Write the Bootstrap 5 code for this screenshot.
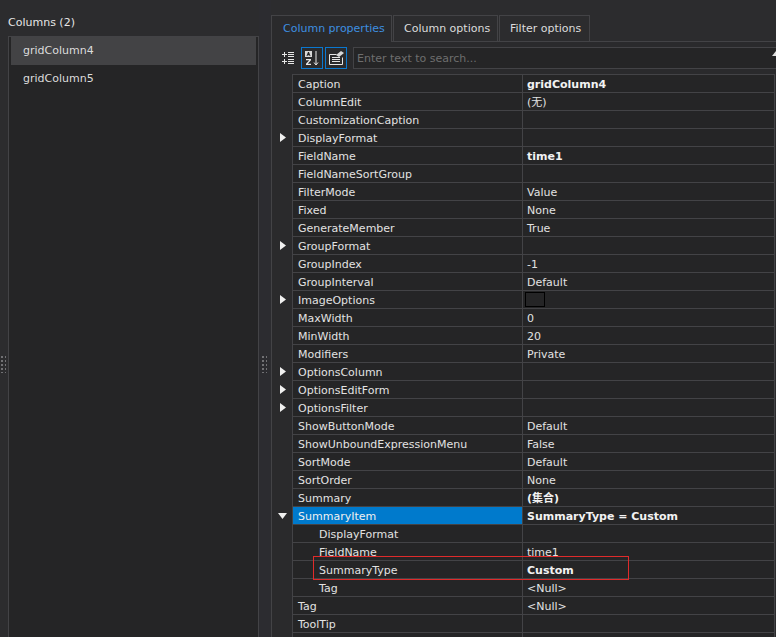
<!DOCTYPE html>
<html lang="en"><head><meta charset="utf-8">
<link href="https://cdn.jsdelivr.net/npm/bootstrap@5.3.0/dist/css/bootstrap.min.css" rel="stylesheet">
<style>
html,body{height:637px;overflow:hidden}
body{background:#2c2c2e;color:#e6e6e6;font-family:"DejaVu Sans","Noto Sans CJK SC",sans-serif;font-size:11px;line-height:17px}
.app{width:776px;height:637px;overflow:hidden}
.left{width:259px;flex:none;padding-left:8px}
.left-title{height:36px;padding-top:14px}
.list-box{height:601px;width:251px;background:#252526;border:1px solid #434346;border-bottom:0;padding:0 2px}
.item{height:28px;padding:5px 0 0 12px;line-height:17px;color:#dcdcdc}
.item.on{background:#434345}
.splitter{width:12px;flex:none;background:#2c2c30;position:relative}
.grip{position:absolute;left:2px;top:355px;width:6px;height:18px;background-image:radial-gradient(#77777a 0.7px,transparent 0.8px);background-size:4px 4px}
.grip-left{position:absolute;left:0;top:355px;width:6px;height:18px;background-image:radial-gradient(#77777a 0.7px,transparent 0.8px);background-size:4px 4px}
.right{flex:1;min-width:0;padding-top:15px}
.tabs{height:27px;border-bottom:1px solid #434346}
.tab{height:26px;padding:4px 10px 0 10px;border:1px solid #434346;border-bottom:0;margin-right:1px;color:#dcdcdc;white-space:nowrap}
.tab.on{background:#2a2a2c;color:#3e8fe0;padding-left:11px;height:27px;margin-bottom:-1px;width:121px}
.tab.t2{width:105px}
.tab.t3{width:91px}
.body{background:#2a2a2c;height:595px;border-left:1px solid #434346}
.toolbar{height:32px;padding:5px 0 0 5px}
.tbtn{width:22px;height:22px;margin-right:2px;border:1px solid transparent;display:flex;align-items:center;justify-content:center;flex:none}
.tbtn.on{border-color:#0a78d0}
.search{height:22px;flex:1;margin-left:4px;border:1px solid #434346;border-right:0;color:#6e6e6e;padding:2px 3px 0;background:#252526;position:relative}
.clear{position:absolute;right:0;top:3px}
.grid{margin:0 1px 0 20px;border-top:1px solid #434346;border-left:1px solid #434346;background:#252526}
.row-p{height:18px;display:flex;border-bottom:1px solid #434346;position:relative}
.n{width:230px;flex:none;padding-left:5px;padding-top:1px;border-right:1px solid #434346;white-space:nowrap;line-height:17px;color:#e2e2e2;overflow:hidden}
.v{flex:1;padding-left:4px;padding-top:1px;white-space:nowrap;line-height:17px;color:#e2e2e2;border-right:1px solid #434346;overflow:hidden}
.n.sub{padding-left:26px}
.n.sel{background:#007acc;color:#f0f0f0}
.b{font-weight:700;color:#f2f2f2}
.arrow{position:absolute;left:-13px;top:4px}
.arrow.down{left:-15px;top:6px}
.red{position:absolute;left:20px;top:-5px;width:316px;height:24px;border:1px solid #e02b2b;z-index:2}
.swatch{display:block;width:20px;height:15px;border:1px solid #000;margin:0 0 0 -2px;background:#252526}
</style></head>
<body>
<div class="app d-flex">
 <div class="left position-relative">
  <div class="grip-left"></div>
  <div class="left-title">Columns (2)</div>
  <div class="list-box">
   <div class="item on">gridColumn4</div>
   <div class="item">gridColumn5</div>
  </div>
 </div>
 <div class="splitter"><div class="grip"></div></div>
 <div class="right">
  <div class="tabs d-flex">
   <div class="tab on">Column properties</div>
   <div class="tab t2">Column options</div>
   <div class="tab t3">Filter options</div>
  </div>
  <div class="body">
   <div class="toolbar d-flex">
    <div class="tbtn"><svg width="12" height="12" viewBox="0 0 12 12" fill="none" stroke="#e6e6e6"><path d="M0 2.500h5M2.500 0v5M0 9.500h5M2.500 7v5M6 .5h6M6 2.500h6M6 4.500h6M6 7.500h6M6 9.500h6M6 11.500h6"/></svg></div>
    <div class="tbtn on"><svg width="14" height="14" viewBox="0 0 14 14" fill="none"><path d="M0 0h7v6H0z" fill="#d8d8d8"/><path d="M3 1 1.500 5h1l.2-.8h1.600l.2.8h1L4 1z" fill="#252526"/><path d="M1 8h5v1.200L2.800 12.800H6V14H1v-1.200L4.200 9.200H1z" fill="#e6e6e6"/><path d="M11 0v13.500M9 11.500l2 2.500 2-2.500" stroke="#e6e6e6"/></svg></div>
    <div class="tbtn on"><svg width="15" height="14" viewBox="0 0 15 14" fill="none"><path d="M.5 3.500h7M.5 3.500v10h13v-7" stroke="#e6e6e6"/><path d="M3 6.500h8M3 8.500h8M3 10.500h8" stroke="#e6e6e6"/><path d="M7 4l5-4 3 2-5 4z" fill="#d8d8d8"/></svg></div>
    <div class="search">Enter text to search...<svg class="clear" width="4" height="5" viewBox="0 0 4 5"><path d="M0 5l4-5v5z" fill="#e0e0e0"/></svg></div>
   </div>
   <div class="grid">
<div class="row-p"><div class="n">Caption</div><div class="v b">gridColumn4</div></div>
<div class="row-p"><div class="n">ColumnEdit</div><div class="v">(无)</div></div>
<div class="row-p"><div class="n">CustomizationCaption</div><div class="v"></div></div>
<div class="row-p"><svg class="arrow" width="6" height="9" viewBox="0 0 6 9"><path d="M0 0l6 4.500L0 9z" fill="#f0f0f0"/></svg><div class="n">DisplayFormat</div><div class="v"></div></div>
<div class="row-p"><div class="n">FieldName</div><div class="v b">time1</div></div>
<div class="row-p"><div class="n">FieldNameSortGroup</div><div class="v"></div></div>
<div class="row-p"><div class="n">FilterMode</div><div class="v">Value</div></div>
<div class="row-p"><div class="n">Fixed</div><div class="v">None</div></div>
<div class="row-p"><div class="n">GenerateMember</div><div class="v">True</div></div>
<div class="row-p"><svg class="arrow" width="6" height="9" viewBox="0 0 6 9"><path d="M0 0l6 4.500L0 9z" fill="#f0f0f0"/></svg><div class="n">GroupFormat</div><div class="v"></div></div>
<div class="row-p"><div class="n">GroupIndex</div><div class="v">-1</div></div>
<div class="row-p"><div class="n">GroupInterval</div><div class="v">Default</div></div>
<div class="row-p"><svg class="arrow" width="6" height="9" viewBox="0 0 6 9"><path d="M0 0l6 4.500L0 9z" fill="#f0f0f0"/></svg><div class="n">ImageOptions</div><div class="v"><span class="swatch"></span></div></div>
<div class="row-p"><div class="n">MaxWidth</div><div class="v">0</div></div>
<div class="row-p"><div class="n">MinWidth</div><div class="v">20</div></div>
<div class="row-p"><div class="n">Modifiers</div><div class="v">Private</div></div>
<div class="row-p"><svg class="arrow" width="6" height="9" viewBox="0 0 6 9"><path d="M0 0l6 4.500L0 9z" fill="#f0f0f0"/></svg><div class="n">OptionsColumn</div><div class="v"></div></div>
<div class="row-p"><svg class="arrow" width="6" height="9" viewBox="0 0 6 9"><path d="M0 0l6 4.500L0 9z" fill="#f0f0f0"/></svg><div class="n">OptionsEditForm</div><div class="v"></div></div>
<div class="row-p"><svg class="arrow" width="6" height="9" viewBox="0 0 6 9"><path d="M0 0l6 4.500L0 9z" fill="#f0f0f0"/></svg><div class="n">OptionsFilter</div><div class="v"></div></div>
<div class="row-p"><div class="n">ShowButtonMode</div><div class="v">Default</div></div>
<div class="row-p"><div class="n">ShowUnboundExpressionMenu</div><div class="v">False</div></div>
<div class="row-p"><div class="n">SortMode</div><div class="v">Default</div></div>
<div class="row-p"><div class="n">SortOrder</div><div class="v">None</div></div>
<div class="row-p"><div class="n">Summary</div><div class="v b">(集合)</div></div>
<div class="row-p"><svg class="arrow down" width="9" height="6" viewBox="0 0 9 6"><path d="M0 0h9L4.500 6z" fill="#f0f0f0"/></svg><div class="n sel">SummaryItem</div><div class="v b">SummaryType = Custom</div></div>
<div class="row-p"><div class="n sub">DisplayFormat</div><div class="v"></div></div>
<div class="row-p"><div class="n sub">FieldName</div><div class="v">time1</div></div>
<div class="row-p"><div class="red"></div><div class="n sub">SummaryType</div><div class="v b">Custom</div></div>
<div class="row-p"><div class="n sub">Tag</div><div class="v">&lt;Null&gt;</div></div>
<div class="row-p"><div class="n">Tag</div><div class="v">&lt;Null&gt;</div></div>
<div class="row-p"><div class="n">ToolTip</div><div class="v"></div></div>
<div class="row-p"><div class="n">UnboundDataType</div><div class="v"></div></div>
   </div>
  </div>
 </div>
</div>
<script src="https://cdn.jsdelivr.net/npm/bootstrap@5.3.0/dist/js/bootstrap.bundle.min.js"></script>
</body></html>
